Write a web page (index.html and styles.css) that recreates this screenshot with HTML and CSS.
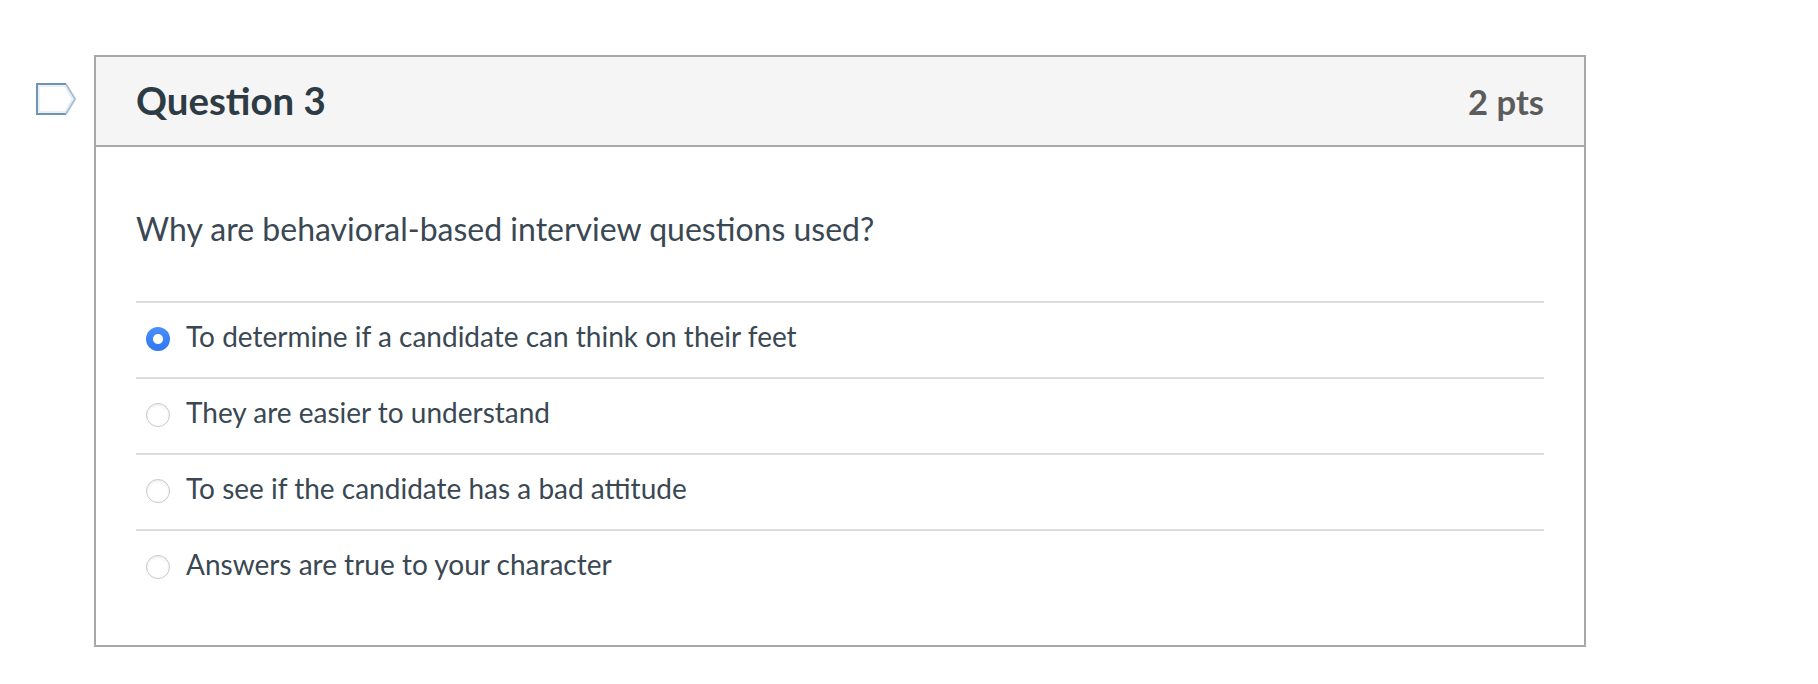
FILE: index.html
```html
<!DOCTYPE html>
<html lang="en">
<head>
<meta charset="utf-8">
<title>Question 3</title>
<link rel="stylesheet" href="styles.css">
</head>
<body>
<div class="quiz">
  <svg class="flag" width="40" height="32" viewBox="0 0 40 32" aria-hidden="true">
    <path class="flag-inner" d="M3 3H29L36.5 16L29 29H3Z"/>
    <path class="flag-left" d="M30 1H1V31H30"/>
    <path class="flag-tip" d="M30 1L39 16L30 31"/>
  </svg>
  <section class="card">
    <header class="card-head">
      <h2 class="title">Question 3</h2>
      <div class="pts">2 pts</div>
    </header>
    <div class="card-body">
      <p class="prompt">Why are behavioral-based interview questions used?</p>
      <ul class="answers">
        <li class="answer"><span class="radio radio-on"></span><span class="answer-text">To determine if a candidate can think on their feet</span></li>
        <li class="answer"><span class="radio"></span><span class="answer-text">They are easier to understand</span></li>
        <li class="answer"><span class="radio"></span><span class="answer-text">To see if the candidate has a bad attitude</span></li>
        <li class="answer"><span class="radio"></span><span class="answer-text">Answers are true to your character</span></li>
      </ul>
    </div>
  </section>
</div>
</body>
</html>
```

FILE: styles.css
```css
* { box-sizing: border-box; }
html, body { margin: 0; padding: 0; background: #fff; }
body {
  font-family: Lato, "Liberation Sans", sans-serif;
  color: #3a4853;
  font-variant-ligatures: common-ligatures;
  text-rendering: optimizeLegibility;
}
.quiz {
  display: flex;
  align-items: flex-start;
  padding: 55px 0 0 36px;
}
.flag {
  flex: none;
  margin: 28px 18px 0 0;
}
.flag path { fill: none; stroke-width: 2; }
.flag .flag-inner { stroke: #e4ebf1; stroke-width: 1.5; }
.flag-left { stroke: #6f93b0; }
.flag-tip { stroke: #a9bfd1; }
.card {
  width: 1492px;
  height: 592px;
  border: 2px solid #a8a8a8;
}
.card-head {
  height: 90px;
  display: flex;
  justify-content: space-between;
  align-items: center;
  padding: 0 40px;
  background: #f5f5f5;
  border-bottom: 2px solid #a8a8a8;
}
.title { margin: 0; padding-bottom: 2px; font-size: 38.4px; font-weight: 700; line-height: 44px; color: #2d3b45; }
.pts { font-size: 34.6px; font-weight: 700; color: #5c5c5c; }
.card-body { padding: 63px 40px 0; }
.prompt { margin: 0 0 53px; font-size: 32px; line-height: 38px; }
.answers { list-style: none; margin: 0; padding: 0; }
.answer {
  height: 76px;
  display: flex;
  align-items: center;
  gap: 16px;
  padding: 0 0 2px 10px;
  border-top: 2px solid #dcdcdc;
  font-size: 28px;
}
.answer-text { padding-bottom: 6px; }
.radio {
  flex: none;
  width: 24px;
  height: 24px;
  border-radius: 50%;
  border: 1px solid #c8c8c8;
  background: #fff;
  box-shadow: inset 0 2px 3px rgba(0, 0, 0, 0.06);
}
.radio-on {
  display: flex;
  align-items: center;
  justify-content: center;
  border: 0;
  box-shadow: none;
  background: radial-gradient(circle, #fff 0 4.5px, transparent 5.5px), linear-gradient(#4a8ffa, #2f76f2);
}
```
